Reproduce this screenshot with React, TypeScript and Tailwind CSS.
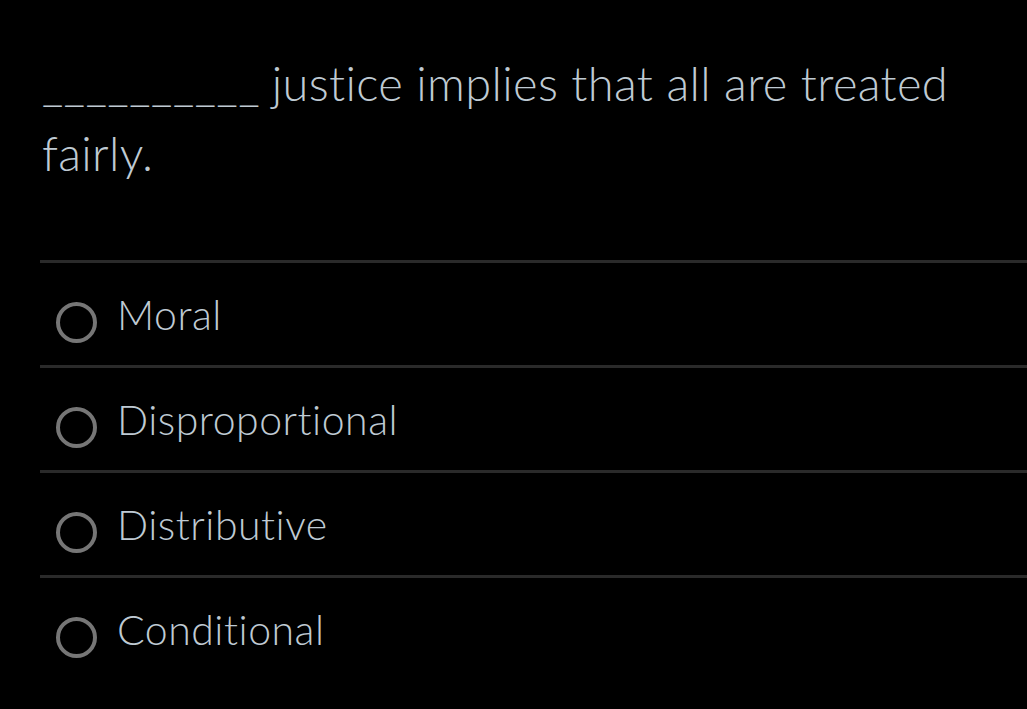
const options = ['Moral', 'Disproportional', 'Distributive', 'Conditional'];

function OptionRow({ label }: { label: string }) {
  return (
    <div className="flex items-start h-[105px] border-t-[3px] border-[#2a2a2a] pl-[16px] pt-[29px]">
      <div className="mt-[10px] w-[41px] h-[41px] shrink-0 rounded-full border-[4px] border-[#767676]" />
      <span className="ml-[20px] text-[41px] leading-[46px] tracking-[0.5px] font-light text-[#bfcad3]">{label}</span>
    </div>
  );
}

export default function App() {
  return (
    <div className="min-h-[709px] bg-black pl-[40px] overflow-hidden" style={{ fontFamily: 'Lato, "Open Sans", sans-serif' }}>
      <p className="pt-[48px] pl-[2px] pr-[16px] text-[47px] leading-[70px] tracking-[0.35px] font-light text-[#bfcad3]">
        <span className="tracking-[0.65px] [word-spacing:-2px]">__________ </span>justice implies that all are treated fairly.
      </p>
      <div className="mt-[72px]">
        {options.map((o) => (
          <OptionRow key={o} label={o} />
        ))}
      </div>
    </div>
  );
}
